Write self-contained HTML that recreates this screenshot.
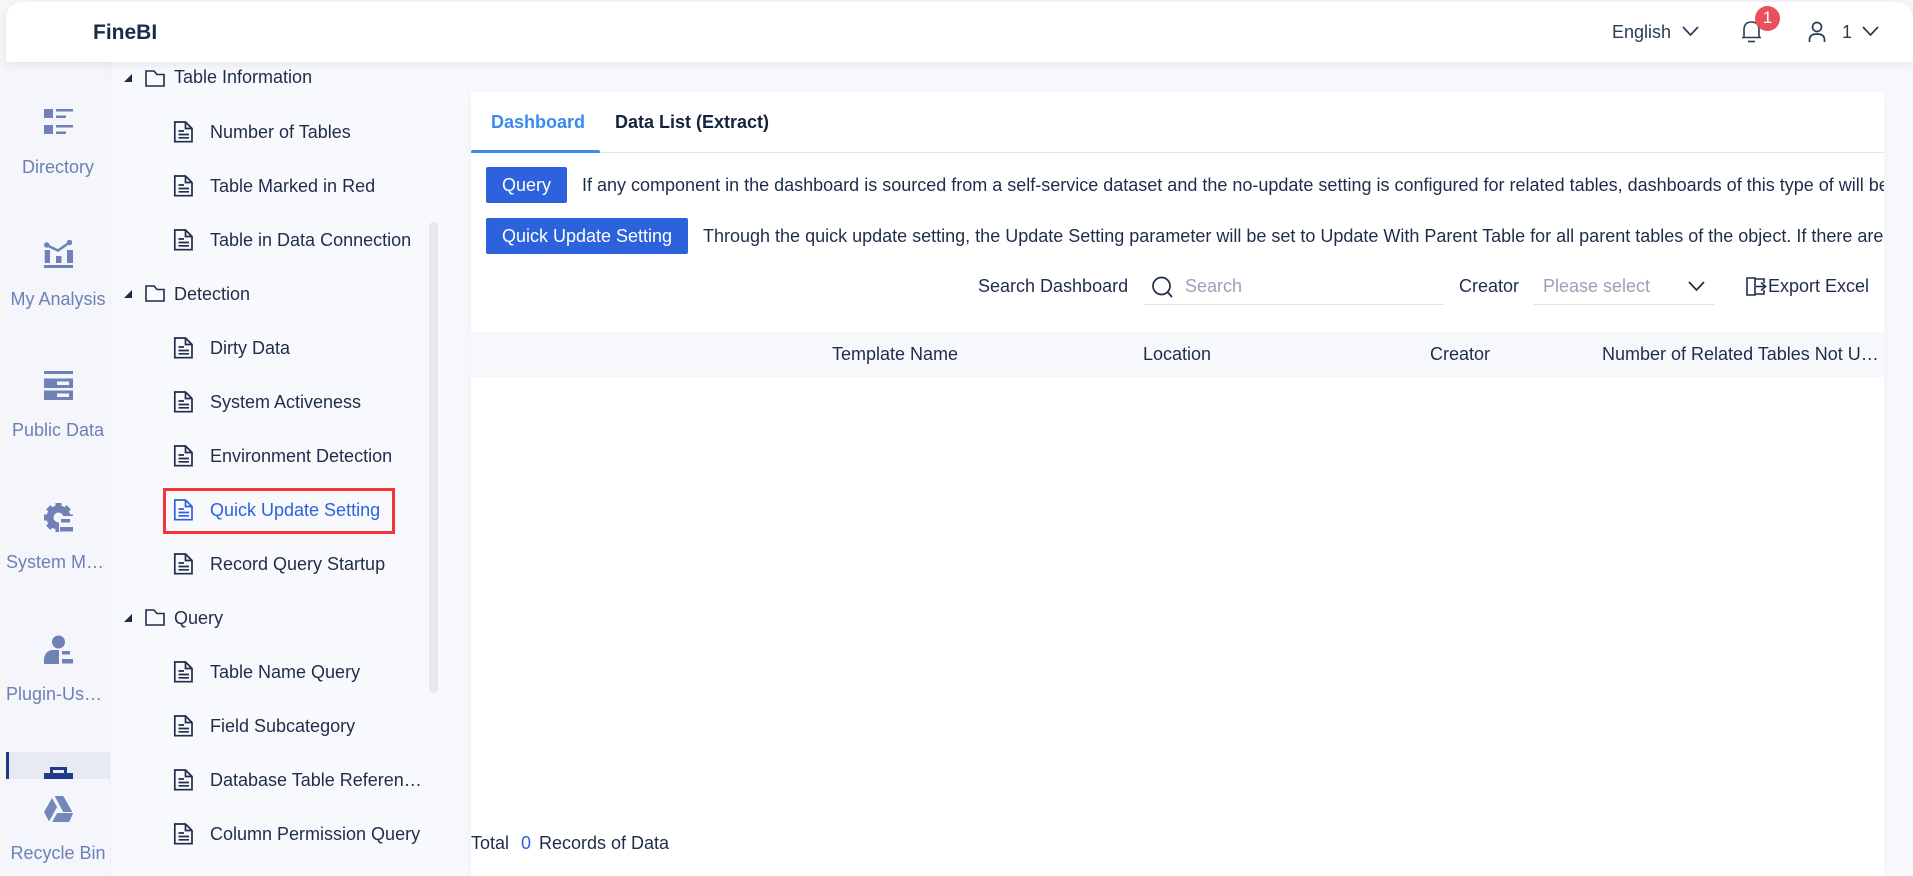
<!DOCTYPE html>
<html><head><meta charset="utf-8">
<style>
html,body{margin:0;padding:0;width:1913px;height:876px;overflow:hidden;background:#f6f6f7;font-family:"Liberation Sans",Arial,sans-serif;color:#1f2d4b}
div,span,svg{position:absolute}
.t{white-space:nowrap;line-height:20px;font-size:18px;letter-spacing:0}
.side{position:absolute;left:6px;width:104px;text-align:center;color:#6d80b4;white-space:nowrap;line-height:20px;font-size:18px}
.b{font-weight:bold}
svg{overflow:visible}
</style></head><body>
<svg width="0" height="0" style="position:absolute">
<defs>
<g id="doc" fill="none" stroke="#1f2d4b" stroke-width="1.700"><path d="M.8 1H11.500L18 7.500V20.700H.8Z"/><path d="M11.500 1V7.500H18"/><path d="M4.500 10H10M4.500 13.500H15M4.500 16.800H15"/></g>
<g id="docb" fill="none" stroke="#2c62dc" stroke-width="1.700"><path d="M.8 1H11.500L18 7.500V20.700H.8Z"/><path d="M11.500 1V7.500H18"/><path d="M4.500 10H10M4.500 13.500H15M4.500 16.800H15"/></g>
<g id="fold"><path d="M1 1H9L12 4.500H19V16H1Z" fill="none" stroke="#1f2d4b" stroke-width="1.600"/></g>
</defs></svg>

<!-- sidebar -->
<div style="left:6px;top:62px;width:104px;height:814px;background:#f5f6fb;border-right:1px solid #eceef4"></div>
<!-- tree background -->
<div style="left:111px;top:62px;width:1802px;height:814px;background:#f8f9fd"></div>

<!-- tree items -->
<svg style="left:124px;top:74px" width="8" height="8"><path d="M8 0V8H0Z" fill="#1f2d4b"/></svg>
<svg style="left:145px;top:70px" width="20" height="18"><use href="#fold"/></svg>
<span class="t" style="left:174px;top:67px">Table Information</span>
<svg style="left:174px;top:121px" width="20" height="22"><use href="#doc"/></svg>
<span class="t" style="left:210px;top:122px">Number of Tables</span>
<svg style="left:174px;top:175px" width="20" height="22"><use href="#doc"/></svg>
<span class="t" style="left:210px;top:176px">Table Marked in Red</span>
<svg style="left:174px;top:229px" width="20" height="22"><use href="#doc"/></svg>
<span class="t" style="left:210px;top:230px">Table in Data Connection</span>

<svg style="left:124px;top:290px" width="8" height="8"><path d="M8 0V8H0Z" fill="#1f2d4b"/></svg>
<svg style="left:145px;top:285px" width="20" height="18"><use href="#fold"/></svg>
<span class="t" style="left:174px;top:284px">Detection</span>
<svg style="left:174px;top:337px" width="20" height="22"><use href="#doc"/></svg>
<span class="t" style="left:210px;top:338px">Dirty Data</span>
<svg style="left:174px;top:391px" width="20" height="22"><use href="#doc"/></svg>
<span class="t" style="left:210px;top:392px">System Activeness</span>
<svg style="left:174px;top:445px" width="20" height="22"><use href="#doc"/></svg>
<span class="t" style="left:210px;top:446px">Environment Detection</span>
<svg style="left:174px;top:499px" width="20" height="22"><use href="#docb"/></svg>
<span class="t" style="left:210px;top:500px;color:#2c62dc">Quick Update Setting</span>
<svg style="left:174px;top:553px" width="20" height="22"><use href="#doc"/></svg>
<span class="t" style="left:210px;top:554px">Record Query Startup</span>

<svg style="left:124px;top:614px" width="8" height="8"><path d="M8 0V8H0Z" fill="#1f2d4b"/></svg>
<svg style="left:145px;top:609px" width="20" height="18"><use href="#fold"/></svg>
<span class="t" style="left:174px;top:608px">Query</span>
<svg style="left:174px;top:661px" width="20" height="22"><use href="#doc"/></svg>
<span class="t" style="left:210px;top:662px">Table Name Query</span>
<svg style="left:174px;top:715px" width="20" height="22"><use href="#doc"/></svg>
<span class="t" style="left:210px;top:716px">Field Subcategory</span>
<svg style="left:174px;top:769px" width="20" height="22"><use href="#doc"/></svg>
<span class="t" style="left:210px;top:770px">Database Table Referen…</span>
<svg style="left:174px;top:823px" width="20" height="22"><use href="#doc"/></svg>
<span class="t" style="left:210px;top:824px">Column Permission Query</span>

<!-- red box -->
<div style="left:163px;top:488px;width:226px;height:40px;border:3px solid #f5333a"></div>
<!-- scrollbar -->
<div style="left:429px;top:222px;width:9px;height:471px;background:#e7e8ed;border-radius:5px"></div>

<!-- sidebar icons -->
<svg style="left:44px;top:109px" width="29" height="25" fill="#6f81b5"><rect width="9" height="9"/><rect x="12" width="17" height="2.500"/><rect x="12" y="6.500" width="10" height="2.500"/><rect y="16" width="9" height="9"/><rect x="12" y="16" width="17" height="2.500"/><rect x="12" y="22.500" width="10" height="2.500"/></svg>
<div class="side" style="top:157px">Directory</div>

<svg style="left:44px;top:240px" width="29" height="28" fill="#6f81b5"><path d="M2.500 5L14 10.500L25.500 2.500" fill="none" stroke="#6f81b5" stroke-width="2.500"/><circle cx="2.700" cy="5" r="2.700"/><circle cx="25.500" cy="2.500" r="2.700"/><path d="M.7 10H6V23H.7ZM12 16H17.500V23H12ZM23 10H29V23H23Z"/><rect y="25" width="29" height="3"/></svg>
<div class="side" style="top:289px">My Analysis</div>

<svg style="left:44px;top:371px" width="29" height="29" fill="#6f81b5"><rect width="29" height="3"/><path fill-rule="evenodd" d="M0 7.500H29V17H0ZM13 10.500V14H25V10.500Z"/><path fill-rule="evenodd" d="M0 19.500H29V29H0ZM13 22.500V26H25V22.500Z"/></svg>
<div class="side" style="top:420px">Public Data</div>

<svg style="left:44px;top:503px" width="29" height="29"><g fill="#6f81b5"><g transform="translate(14.500 14.500)"><rect x="-3" y="-14.500" width="6" height="6"/><rect x="-3" y="-14.500" width="6" height="6" transform="rotate(45)"/><rect x="-3" y="-14.500" width="6" height="6" transform="rotate(90)"/><rect x="-3" y="-14.500" width="6" height="6" transform="rotate(135)"/><rect x="-3" y="-14.500" width="6" height="6" transform="rotate(180)"/><rect x="-3" y="-14.500" width="6" height="6" transform="rotate(225)"/><rect x="-3" y="-14.500" width="6" height="6" transform="rotate(270)"/><rect x="-3" y="-14.500" width="6" height="6" transform="rotate(315)"/></g></g><circle cx="14.500" cy="14.500" r="8.500" fill="none" stroke="#6f81b5" stroke-width="7"/><rect x="15" y="13" width="15" height="17" fill="#f5f6fb"/><g fill="#6f81b5"><rect x="17" y="16" width="9" height="3.500"/><rect x="16" y="24" width="13" height="4.500"/></g></svg>
<div class="side" style="top:552px;left:6px;width:100px;text-align:left">System M…</div>

<svg style="left:44px;top:635px" width="29" height="29" fill="#6f81b5"><circle cx="14.500" cy="7" r="6.500"/><path d="M0 29V24Q1 16 8 15H15V29Z"/><rect x="18" y="16" width="8" height="3.500"/><rect x="18" y="24" width="11" height="4.500"/></svg>
<div class="side" style="top:684px;left:6px;width:100px;text-align:left">Plugin-Us…</div>

<!-- active item -->
<div style="left:6px;top:752px;width:104px;height:27px;background:#e8eaf3;border-right:1px solid #eceef4"></div>
<div style="left:6px;top:752px;width:3px;height:27px;background:#1f3a8a"></div>
<svg style="left:44px;top:767px" width="29" height="12" fill="#1f3a8a"><path fill-rule="evenodd" d="M6 0H23V6H29V12H0V6H6ZM9 3V6H20V3Z"/></svg>

<!-- recycle -->
<div style="left:6px;top:779px;width:104px;height:97px;background:#f5f6fb;border-right:1px solid #eceef4"></div>
<svg style="left:44px;top:795px" width="29" height="28" fill="#7387b8" stroke="#7387b8" stroke-width="1" stroke-linejoin="round"><path d="M11.500 1.500H19L27.500 16.500H19.500Z"/><path d="M8 4L.7 17L5 25.500L12.500 12Z"/><path d="M13.500 18.500H28.500L24.700 26.500H9Z"/></svg>
<div class="side" style="top:843px">Recycle Bin</div>

<!-- header -->
<div style="left:6px;top:2px;width:1907px;height:60px;background:#fff;border-radius:16px 16px 0 0;box-shadow:0 3px 10px rgba(60,70,110,.10)"></div>
<span class="t b" style="left:93px;top:23px;color:#172b4d;font-size:21px">FineBI</span>
<span class="t" style="left:1612px;top:22px;color:#2b3a57">English</span>
<svg style="left:1682px;top:26px" width="17" height="11"><path d="M1 1L8.500 9L16 1" fill="none" stroke="#2b3a57" stroke-width="1.700"/></svg>
<svg style="left:1741px;top:20px" width="21" height="23" fill="none" stroke="#2b3a57" stroke-width="1.600"><path d="M1 17.500H20M3 17.500V10Q3 2 10.500 2Q18 2 18 10V17.500"/><path d="M7 21.500H14"/></svg>
<div style="left:1755px;top:6px;width:25px;height:25px;border-radius:50%;background:#e8505b;color:#fff;font-size:17px;line-height:24px;text-align:center">1</div>
<svg style="left:1808px;top:21px" width="18" height="22" fill="none" stroke="#2b3a57" stroke-width="1.700"><circle cx="9" cy="6" r="4.500"/><path d="M1.500 21V19Q1.500 13 9 13Q16.500 13 16.500 19V21"/></svg>
<span class="t" style="left:1842px;top:22px;color:#2b3a57">1</span>
<svg style="left:1862px;top:26px" width="17" height="11"><path d="M1 1L8.500 9L16 1" fill="none" stroke="#2b3a57" stroke-width="1.700"/></svg>

<!-- content panel -->
<div style="left:471px;top:92px;width:1413px;height:784px;background:#fff;overflow:hidden;box-shadow:0 0 10px rgba(60,70,110,.05)">
  <div style="left:0;top:60px;width:1413px;height:1px;background:#e1e3ee"></div>
  <div style="left:0;top:58px;width:129px;height:3px;background:#3c8af0;border-radius:2px 2px 0 0"></div>
  <span class="t b" style="left:20px;top:20px;color:#3c8af0">Dashboard</span>
  <span class="t b" style="left:144px;top:20px;color:#14233f">Data List (Extract)</span>

  <div style="left:15px;top:75px;width:81px;height:36px;background:#2c62dc;border-radius:2px;color:#fff;font-size:18px;line-height:36px;text-align:center">Query</div>
  <span class="t" style="left:111px;top:83px">If any component in the dashboard is sourced from a self-service dataset and the no-update setting is configured for related tables, dashboards of this type of will be</span>
  <div style="left:15px;top:126px;width:202px;height:36px;background:#2c62dc;border-radius:2px;color:#fff;font-size:18px;line-height:36px;text-align:center;white-space:nowrap">Quick Update Setting</div>
  <span class="t" style="left:232px;top:134px">Through the quick update setting, the Update Setting parameter will be set to Update With Parent Table for all parent tables of the object. If there are</span>

  <span class="t" style="left:507px;top:184px">Search Dashboard</span>
  <svg style="left:680px;top:184px" width="23" height="23" fill="none" stroke="#1f2d4b" stroke-width="1.700"><circle cx="10.500" cy="10" r="8.500"/><path d="M16.500 16L21 21"/></svg>
  <span class="t" style="left:714px;top:184px;color:#9aa2b5">Search</span>
  <div style="left:673px;top:212px;width:300px;height:1px;background:#dfe1ea"></div>
  <span class="t" style="left:988px;top:184px">Creator</span>
  <span class="t" style="left:1072px;top:184px;color:#9aa2b5">Please select</span>
  <svg style="left:1217px;top:189px" width="17" height="11"><path d="M1 1L8.500 9L16 1" fill="none" stroke="#1f2d4b" stroke-width="1.700"/></svg>
  <div style="left:1063px;top:212px;width:180px;height:1px;background:#dfe1ea"></div>
  <svg style="left:1275px;top:184px" width="22" height="20" fill="none" stroke="#1f2d4b" stroke-width="1.600"><path d="M1 2H9V19H1ZM9 3H18V7M18 14V18H9M10 10.500H19.500M15 6.500L19.500 10.500L15 14.500"/></svg>
  <span class="t" style="left:1297px;top:184px">Export Excel</span>

  <div style="left:0;top:240px;width:1413px;height:45px;background:#f7f8fc"></div>
  <span class="t" style="left:361px;top:252px">Template Name</span>
  <span class="t" style="left:672px;top:252px">Location</span>
  <span class="t" style="left:959px;top:252px">Creator</span>
  <span class="t" style="left:1131px;top:252px">Number of Related Tables Not U…</span>

  <span class="t" style="left:0;top:741px">Total</span>
  <span class="t" style="left:50px;top:741px;color:#2c62dc">0</span>
  <span class="t" style="left:68px;top:741px">Records of Data</span>
</div>
</body></html>
